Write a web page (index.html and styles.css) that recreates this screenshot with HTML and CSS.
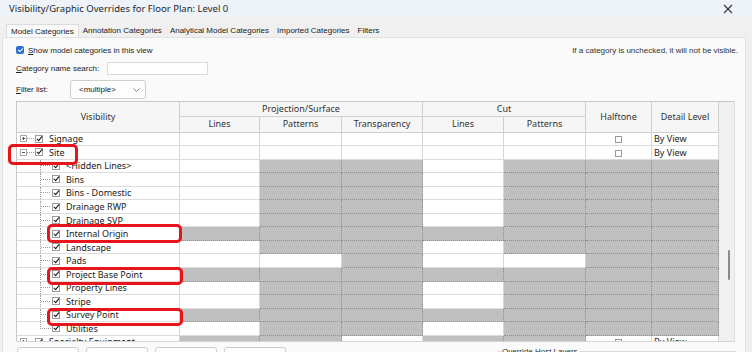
FILE: index.html
```html
<!DOCTYPE html>
<html>
<head>
    <meta charset="UTF-8">
    <title>Visibility/Graphic Overrides</title>
    <link rel="stylesheet" href="styles.css">
</head>
<body>
    <div class="titlebar">
        <span>Visibility/Graphic Overrides for Floor Plan: Level 0</span>
        <svg class="close" width="10" height="10" viewBox="0 0 10 10"><path d="M1 1L9 9M9 1L1 9" stroke="#333" stroke-width="1.1"/></svg>
    </div>
    <div class="tabs">
        <span class="tab active">Model Categories</span>
        <span class="tab">Annotation Categories</span>
        <span class="tab">Analytical Model Categories</span>
        <span class="tab">Imported Categories</span>
        <span class="tab">Filters</span>
    </div>
    <div class="panel">
        <div class="opts">
            <label class="show"><span class="bluebox"></span><u>S</u>how model categories in this view</label>
            <span class="hint">If a category is unchecked, it will not be visible.</span>
        </div>
        <div class="field search">
            <label><u>C</u>ategory name search:</label>
            <span class="input"></span>
        </div>
        <div class="field filter">
            <label><u>F</u>ilter list:</label>
            <span class="select">&lt;multiple&gt;<svg width="7" height="4" viewBox="0 0 7 4"><path d="M0.5 0.5L3.5 3.5L6.5 0.5" fill="none" stroke="#666" stroke-width="0.8"/></svg></span>
        </div>

        <div class="gridbox">
            <table class="grid">
                <colgroup>
                    <col class="c-vis"><col class="c-lines"><col class="c-pat"><col class="c-tra">
                    <col class="c-lines2"><col class="c-pat2"><col class="c-half"><col class="c-det">
                </colgroup>
                <thead>
                    <tr class="h1">
                        <th rowspan="2">Visibility</th>
                        <th colspan="3">Projection/Surface</th>
                        <th colspan="2">Cut</th>
                        <th rowspan="2">Halftone</th>
                        <th rowspan="2">Detail Level</th>
                    </tr>
                    <tr class="h2">
                        <th>Lines</th><th>Patterns</th><th>Transparency</th>
                        <th>Lines</th><th>Patterns</th>
                    </tr>
                </thead>
                <tbody>
                    <tr><td><div class="tree"><span class="exp plus"></span><span class="link"></span><span class="cb"></span>Signage</div></td><td></td><td></td><td></td><td></td><td></td><td class="ht"><span class="box"></span></td><td>By View</td></tr>
                    <tr><td><div class="tree"><span class="exp"></span><span class="link"></span><span class="cb"></span>Site</div></td><td></td><td></td><td></td><td></td><td></td><td class="ht"><span class="box"></span></td><td>By View</td></tr>
                    <tr><td><div class="tree child"><span class="branch"></span><span class="cb"></span>&lt;Hidden Lines&gt;</div></td><td></td><td class="g"></td><td class="g"></td><td></td><td class="g"></td><td class="g"></td><td class="g"></td></tr>
                    <tr><td><div class="tree child"><span class="branch"></span><span class="cb"></span>Bins</div></td><td></td><td class="g"></td><td class="g"></td><td></td><td class="g"></td><td class="g"></td><td class="g"></td></tr>
                    <tr><td><div class="tree child"><span class="branch"></span><span class="cb"></span>Bins - Domestic</div></td><td></td><td class="g"></td><td class="g"></td><td></td><td class="g"></td><td class="g"></td><td class="g"></td></tr>
                    <tr><td><div class="tree child"><span class="branch"></span><span class="cb"></span>Drainage RWP</div></td><td></td><td class="g"></td><td class="g"></td><td></td><td class="g"></td><td class="g"></td><td class="g"></td></tr>
                    <tr><td><div class="tree child"><span class="branch"></span><span class="cb"></span>Drainage SVP</div></td><td></td><td class="g"></td><td class="g"></td><td></td><td class="g"></td><td class="g"></td><td class="g"></td></tr>
                    <tr><td><div class="tree child"><span class="branch"></span><span class="cb"></span>Internal Origin</div></td><td class="g"></td><td class="g"></td><td class="g"></td><td class="g"></td><td class="g"></td><td class="g"></td><td class="g"></td></tr>
                    <tr><td><div class="tree child"><span class="branch"></span><span class="cb"></span>Landscape</div></td><td></td><td class="g"></td><td class="g"></td><td></td><td class="g"></td><td class="g"></td><td class="g"></td></tr>
                    <tr><td><div class="tree child"><span class="branch"></span><span class="cb"></span>Pads</div></td><td></td><td></td><td class="g"></td><td></td><td></td><td class="g"></td><td class="g"></td></tr>
                    <tr><td><div class="tree child"><span class="branch"></span><span class="cb"></span>Project Base Point</div></td><td class="g"></td><td class="g"></td><td class="g"></td><td class="g"></td><td class="g"></td><td class="g"></td><td class="g"></td></tr>
                    <tr><td><div class="tree child"><span class="branch"></span><span class="cb"></span>Property Lines</div></td><td></td><td class="g"></td><td class="g"></td><td></td><td class="g"></td><td class="g"></td><td class="g"></td></tr>
                    <tr><td><div class="tree child"><span class="branch"></span><span class="cb"></span>Stripe</div></td><td></td><td class="g"></td><td class="g"></td><td></td><td class="g"></td><td class="g"></td><td class="g"></td></tr>
                    <tr><td><div class="tree child"><span class="branch"></span><span class="cb"></span>Survey Point</div></td><td class="g"></td><td class="g"></td><td class="g"></td><td class="g"></td><td class="g"></td><td class="g"></td><td class="g"></td></tr>
                    <tr><td><div class="tree child"><span class="branch last"></span><span class="cb"></span>Utilities</div></td><td></td><td class="g"></td><td class="g"></td><td></td><td class="g"></td><td class="g"></td><td class="g"></td></tr>
                    <tr><td><div class="tree"><span class="exp plus"></span><span class="link"></span><span class="cb"></span>Specialty Equipment</div></td><td class="g"></td><td class="g"></td><td></td><td class="g"></td><td class="g"></td><td class="ht"><span class="box"></span></td><td>By View</td></tr>
                </tbody>
            </table>
            <div class="scroll"><div class="thumb"></div></div>
        </div>

        <div class="actions">
            <button>All</button>
            <button>None</button>
            <button>Invert</button>
            <button>Expand All</button>
            <fieldset class="host">
                <legend>Override Host Layers</legend>
            </fieldset>
        </div>
    </div>

    <!-- highlight marks drawn over the grid -->
    <div class="hl hl-site"></div>
    <div class="hl hl-origin"></div>
    <div class="hl hl-base"></div>
    <div class="hl hl-survey"></div>
</body>
</html>
```

FILE: styles.css
```css
body {
    margin: 0;
    width: 752px;
    height: 352px;
    overflow: hidden;
    background-color: #f0f0f0;
    font-family: "Noto Sans", sans-serif;
    color: #222;
}

.titlebar {
    height: 17px;
    display: flex;
    align-items: center;
    justify-content: space-between;
    padding: 0 19px 0 9px;
    background-color: #eef3fa;
    font-size: 9.5px;
    color: #1f1f1f;
}

.tabs {
    height: 20px;
    display: flex;
    align-items: flex-end;
    padding-left: 7px;
    font-family: "Liberation Sans", sans-serif;
    font-size: 8px;
    color: #222;
}
.tab {
    padding: 0 4px;
    height: 13px;
    line-height: 13px;
}
.tab.active {
    background-color: #fafafa;
    border: 1px solid #dcdcdc;
    border-bottom: none;
    height: 12px;
    margin-left: -1px;
}

.panel {
    margin: 0 6px 0 2px;
    height: 330px;
    padding: 0 7px 0 13px;
    background-color: #fafafa;
    border: 1px solid #e2e2e2;
    font-family: "Liberation Sans", sans-serif;
    font-size: 8px;
}

.opts {
    margin-top: 7px;
    height: 10px;
    display: flex;
    align-items: center;
    justify-content: space-between;
}
.show {
    display: flex;
    align-items: center;
}
.bluebox {
    width: 8px;
    height: 8px;
    margin-right: 4px;
    border-radius: 2px;
    background-color: #2a6fcb;
    position: relative;
}
.bluebox::after {
    content: "";
    position: absolute;
    left: 2.5px;
    top: 1px;
    width: 2px;
    height: 4px;
    border: solid #fff;
    border-width: 0 1px 1px 0;
    transform: rotate(45deg);
}
.hint {
    color: #333;
}

.field {
    display: flex;
    align-items: center;
}
.search {
    margin-top: 6px;
    height: 14px;
}
.search label {
    width: 91px;
}
.input {
    width: 101px;
    height: 13px;
    box-sizing: border-box;
    background-color: #fff;
    border: 1px solid #dadada;
}
.filter {
    margin-top: 5px;
    height: 19px;
}
.filter label {
    width: 54px;
}
.select {
    width: 76px;
    height: 19px;
    box-sizing: border-box;
    display: flex;
    align-items: center;
    justify-content: space-between;
    padding: 0 5px 0 8px;
    background-color: #fdfdfd;
    border: 1px solid #cfcfcf;
    border-radius: 3px;
}

.gridbox {
    margin-top: 2px;
    width: 719px;
    height: 240px;
    display: flex;
    overflow: hidden;
    border-bottom: 1px solid #d6d6d6;
}
.grid {
    width: 703px;
    table-layout: fixed;
    border-collapse: separate;
    border-spacing: 0;
    border-top: 1px solid #c9c9c9;
    border-left: 1px solid #c9c9c9;
    background-color: #fff;
    font-family: "Noto Sans", sans-serif;
    font-size: 9px;
    flex: none;
    align-self: flex-start;
}
.c-vis { width: 163px; }
.c-lines { width: 80px; }
.c-pat { width: 82px; }
.c-tra { width: 81px; }
.c-lines2 { width: 81px; }
.c-pat2 { width: 82px; }
.c-half { width: 66px; }
.c-det { width: 67px; }

.grid th {
    box-sizing: border-box;
    background-color: #f6f6f6;
    font-weight: normal;
    color: #333;
    padding: 0;
    border-right: 1px solid #cfcfcf;
    border-bottom: 1px solid #cfcfcf;
    line-height: 12px;
}
.h1 th {
    height: 15px;
}
.h2 th {
    height: 15.5px;
}
.grid td {
    height: 13.55px;
    padding: 0 0 0 2px;
    box-sizing: border-box;
    line-height: 11px;
    white-space: nowrap;
    overflow: hidden;
    border-right: 1px solid #d6d6d6;
    border-bottom: 1px solid #dcdcdc;
}
.grid td:first-child {
    padding: 0;
}
.grid td.g {
    background-color: #c0c0c0;
    border-right: 1px dotted #8e8e8e;
    border-bottom: 1px dotted #8e8e8e;
}
.grid td.ht {
    text-align: center;
    padding: 0;
}
.box {
    display: inline-block;
    width: 7px;
    height: 7px;
    box-sizing: border-box;
    border: 1px solid #9a9a9a;
    background-color: #fff;
    vertical-align: -1px;
}

.tree {
    height: 12px;
    display: flex;
    align-items: center;
    padding-left: 3px;
}
.tree.child {
    padding-left: 23px;
}
.exp {
    width: 7px;
    height: 7px;
    box-sizing: border-box;
    border: 1px solid #a8a8a8;
    background: linear-gradient(#4a5a70, #4a5a70) center / 3px 1px no-repeat;
}
.exp.plus {
    background:
        linear-gradient(#4a5a70, #4a5a70) center / 3px 1px no-repeat,
        linear-gradient(#4a5a70, #4a5a70) center / 1px 3px no-repeat;
}
.link {
    width: 8px;
    height: 1px;
    background: linear-gradient(to right, #a0a0a0 50%, transparent 50%) 0 0 / 2px 1px repeat-x;
}
.branch {
    align-self: stretch;
    width: 10px;
    margin-right: 1px;
    border-left: 1px dotted #a0a0a0;
    background: linear-gradient(to right, #a0a0a0 50%, transparent 50%) left center / 2px 1px repeat-x;
}
.branch.last {
    align-self: flex-start;
    height: 6px;
    background: none;
    border-bottom: 1px dotted #a0a0a0;
}
.cb {
    width: 8px;
    height: 8px;
    margin-right: 6px;
    box-sizing: border-box;
    border: 1px solid #9c9c9c;
    background-color: #fff;
    position: relative;
    flex: none;
}
.cb::after {
    content: "";
    position: absolute;
    left: 1.5px;
    top: -1px;
    width: 2px;
    height: 5px;
    border: solid #111;
    border-width: 0 1.6px 1.6px 0;
    transform: rotate(40deg);
}

.scroll {
    width: 16px;
    background-color: #f0f0f0;
    border-right: 1px solid #e0e0e0;
    border-top: 1px solid #c9c9c9;
}
.thumb {
    width: 2px;
    height: 30px;
    margin: 148px 0 0 9px;
    border-radius: 1px;
    background-color: #8a8a8a;
}

.actions {
    margin-top: 5px;
    display: flex;
    gap: 7px;
    padding-left: 1px;
}
.actions button {
    width: 62px;
    height: 20px;
    padding: 0;
    font-family: "Liberation Sans", sans-serif;
    font-size: 8px;
    color: #333;
    background-color: #fdfdfd;
    border: 1px solid #cdcdcd;
    border-radius: 3px;
}
.host {
    margin: 0 0 0 auto;
    width: 242px;
    height: 20px;
    box-sizing: border-box;
    padding: 0 4px;
    border: 1px solid #dcdcdc;
    border-radius: 3px;
}
.host legend {
    padding: 0 1px;
    font-size: 8px;
    color: #333;
}

.hl {
    position: absolute;
    box-sizing: border-box;
    border: 3px solid #e8141c;
    border-radius: 5px;
}
.hl-site { left: 8px; top: 144px; width: 70px; height: 21px; }
.hl-origin { left: 47px; top: 224px; width: 135px; height: 19px; }
.hl-base { left: 47px; top: 267px; width: 136px; height: 18px; }
.hl-survey { left: 47px; top: 308px; width: 136px; height: 18px; }
```
